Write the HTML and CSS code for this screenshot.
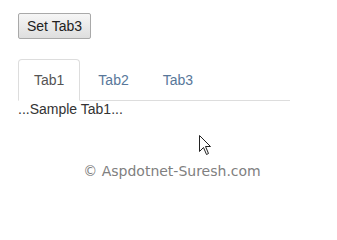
FILE: index.html
```html
<!DOCTYPE html>
<html>
<head>
<meta charset="utf-8">
<link rel="stylesheet" href="styles.css">
</head>
<body>
<div class="page">
  <button class="btn" type="button">Set Tab3</button>
  <ul class="tabs">
    <li class="tab active">Tab1</li>
    <li class="tab">Tab2</li>
    <li class="tab">Tab3</li>
  </ul>
  <div class="pane">...Sample Tab1...</div>
  <div class="footer">© Aspdotnet-Suresh.com</div>
</div>
<svg class="cursor" width="14" height="22" viewBox="0 0 14 22">
  <path d="M0.5 0.5 L0.5 16.5 L4.5 12.5 L7.5 19.5 L9.5 18.5 L6.5 11.5 L11.5 11.5 Z" fill="#fff" stroke="#222" stroke-width="1"/>
</svg>
</body>
</html>
```
FILE: styles.css
```css
html, body {
  margin: 0;
  padding: 0;
  background: #fff;
}
body {
  position: relative;
  width: 337px;
  height: 216px;
  overflow: hidden;
  font-family: "Liberation Sans", Arial, sans-serif;
  font-size: 14px;
  color: #333;
}
.page {
  padding: 13px 0 0 18px;
  width: 272px;
}
.btn {
  display: block;
  height: 26px;
  padding: 0 6px;
  font-family: "Liberation Sans", Arial, sans-serif;
  font-size: 14px;
  color: #222;
  border: 1px solid #a9a9a9;
  border-radius: 2px;
  background: linear-gradient(#f6f6f6, #dedede);
  width: 73px;
}
.tabs {
  list-style: none;
  margin: 20px 0 0 0;
  padding: 0;
  display: flex;
  border-bottom: 1px solid #ddd;
}
.tab {
  padding: 10px 15px;
  line-height: 20px;
  margin-right: 2px;
  margin-bottom: -1px;
  border: 1px solid transparent;
  border-radius: 4px 4px 0 0;
  color: #58779a;
}
.tab.active {
  color: #555;
  border-color: #ddd;
  border-bottom-color: #fff;
  background: #fff;
}
.pane {
  line-height: 16px;
  color: #333;
}
.footer {
  margin-top: 46px;
  text-align: center;
  width: 308px;
  font-family: "DejaVu Sans", Verdana, sans-serif;
  font-size: 14px;
  color: #808080;
}
.cursor {
  position: absolute;
  left: 199px;
  top: 135px;
}
```
